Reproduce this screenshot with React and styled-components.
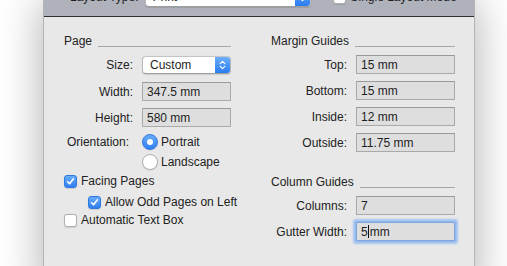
import * as React from 'react';
import styled, { createGlobalStyle } from 'styled-components';

const GlobalStyle = createGlobalStyle`
  html, body { margin: 0; padding: 0; background: #ffffff; }
  body { font-family: "Liberation Sans", Arial, sans-serif; font-size: 12px; color: #222222; }
`;

const Stage = styled.div`
  width: 507px; height: 266px;
  overflow: hidden;
  background: #ffffff;
  display: flex;
`;

const Window = styled.div`
  margin-left: 43px;
  width: 432px; height: 300px;
  flex-shrink: 0;
  box-sizing: border-box;
  border-left: 1px solid #b4b4b4;
  border-right: 1px solid #b4b4b4;
  background: #e8e8e8;
  box-shadow: 0 0 42px rgba(0, 0, 0, 0.32);
  display: flex; flex-direction: column;
`;

const Toolbar = styled.div`
  height: 16px;
  background: #afb2ba;
  border-bottom: 1px solid #2e2e2e;
  overflow: hidden;
`;

const ToolbarRow = styled.div`
  display: flex; align-items: center;
  height: 22px;
  margin-top: -14px;
  padding-left: 26px;
`;

const ToolbarLabel = styled.span`
  color: #1e1e1e;
  margin-right: 6px;
`;

const Body = styled.div`
  display: grid;
  grid-template-columns: 167px 184px;
  column-gap: 40px;
  padding: 17px 0 0 20px;
`;

const Column = styled.div`
  display: flex; flex-direction: column;
`;

const SectionHeader = styled.div`
  display: flex; align-items: flex-end;
  height: 14px;
  margin-top: ${p => p.$top || 0}px;
  line-height: 14px;
`;

const Rule = styled.div`
  flex: 1;
  height: 1px;
  background: #a6a6a6;
  margin: 0 0 1px 6px;
`;

const FormRow = styled.div`
  display: grid;
  grid-template-columns: ${p => p.$label}px 1fr;
  column-gap: 9px;
  align-items: center;
  height: ${p => p.$h || 18}px;
  margin-top: ${p => p.$top || 0}px;
`;

const Label = styled.span`
  text-align: right;
  white-space: nowrap;
  padding-right: ${p => p.$pad || 0}px;
`;

const Field = styled.div`
  position: relative;
  box-sizing: border-box;
  height: 19px;
  padding: 0 4px;
  display: flex; align-items: center;
  background: #dedede;
  border: 1px solid #a9a9a9;
  border-top-color: #9a9a9a;
  color: #1e1e1e;
  ${p => p.$focus && `
    border-color: #7ea6dc;
    box-shadow: 0 0 0 1px #92b7ea, 0 0 2px 3px #a3c4f0;
    border-radius: 1px;
  `}
`;

const Caret = styled.span`
  display: inline-block;
  width: 1px; height: 13px;
  background: #111111;
  margin: 0 1px 0 0;
`;

const Popup = styled.div`
  box-sizing: border-box;
  width: ${p => p.$w}px;
  height: ${p => p.$h || 18}px;
  display: flex; align-items: stretch;
  background: #ffffff;
  border: 1px solid #b9b9b9;
  border-top-color: #c4c4c4;
  border-bottom-color: #9e9e9e;
  border-radius: 4px;
  box-shadow: 0 0.5px 1px rgba(0,0,0,0.12);
  overflow: hidden;
`;

const PopupText = styled.span`
  flex: 1;
  display: flex; align-items: center;
  padding-left: 7px;
  color: #1e1e1e;
`;

const Stepper = styled.span`
  width: 15px;
  display: flex; align-items: center; justify-content: center;
  background: linear-gradient(#6cb0fb, #2a7cf0);
`;

const ChoiceRow = styled.div`
  display: flex; align-items: center;
  height: 18px;
  margin-top: ${p => p.$top || 0}px;
  padding-left: ${p => p.$indent || 0}px;
  white-space: nowrap;
`;

const Box = styled.span`
  box-sizing: border-box;
  width: 13px; height: 13px;
  flex-shrink: 0;
  margin-right: 4px;
  border-radius: 3px;
  display: flex; align-items: center; justify-content: center;
  background: ${p => (p.$on ? 'linear-gradient(#68acfa, #2f7ff1)' : '#ffffff')};
  border: 1px solid ${p => (p.$on ? '#2f78e0' : '#b0b0b0')};
  box-shadow: 0 0.5px 1px rgba(0,0,0,0.12);
`;

const Radio = styled(Box)`
  width: 16px; height: 16px;
  border-radius: 50%;
  margin-right: 3px;
`;

const Dot = styled.span`
  width: 6px; height: 6px;
  border-radius: 50%;
  background: #ffffff;
`;

const Check = () => (
  <svg width="9" height="9" viewBox="0 0 9 9">
    <path d="M1.6 4.8 L3.6 6.8 L7.4 1.8" fill="none" stroke="#ffffff" strokeWidth="1.6" strokeLinecap="round" strokeLinejoin="round" />
  </svg>
);

const Chevrons = () => (
  <svg width="7" height="10" viewBox="0 0 7 10">
    <path d="M1.2 3.6 L3.5 1.4 L5.8 3.6 M1.2 6.4 L3.5 8.6 L5.8 6.4" fill="none" stroke="#ffffff" strokeWidth="1.2" strokeLinecap="round" strokeLinejoin="round" />
  </svg>
);

const Checkbox = ({ on, children, top, indent }) => (
  <ChoiceRow $top={top} $indent={indent}>
    <Box $on={on}>{on && <Check />}</Box>
    {children}
  </ChoiceRow>
);

const RadioOption = ({ on, children }) => (
  <span style={{ display: 'flex', alignItems: 'center' }}>
    <Radio $on={on}>{on && <Dot />}</Radio>
    {children}
  </span>
);

const pageRows = [
  ['Width:', '347.5 mm'],
  ['Height:', '580 mm'],
];

const marginRows = [
  ['Top:', '15 mm'],
  ['Bottom:', '15 mm'],
  ['Inside:', '12 mm'],
  ['Outside:', '11.75 mm'],
];

export default function App() {
  return (
    <Stage>
      <GlobalStyle />
      <Window>
        <Toolbar>
          <ToolbarRow>
            <ToolbarLabel>Layout Type:</ToolbarLabel>
            <Popup $w={166} $h={20}>
              <PopupText>Print</PopupText>
              <Stepper><Chevrons /></Stepper>
            </Popup>
            <Box style={{ marginLeft: 22, marginRight: 5 }} />
            <ToolbarLabel>Single Layout Mode</ToolbarLabel>
          </ToolbarRow>
        </Toolbar>
        <Body>
          <Column>
            <SectionHeader>Page<Rule /></SectionHeader>
            <FormRow $label={69} $top={8}>
              <Label>Size:</Label>
              <Popup $w={89}>
                <PopupText>Custom</PopupText>
                <Stepper><Chevrons /></Stepper>
              </Popup>
            </FormRow>
            {pageRows.map(([label, value]) => (
              <FormRow key={label} $label={69} $top={8}>
                <Label>{label}</Label>
                <Field>{value}</Field>
              </FormRow>
            ))}
            <FormRow $label={69} $top={6} $h={20}>
              <Label $pad={4}>Orientation:</Label>
              <RadioOption on>Portrait</RadioOption>
            </FormRow>
            <FormRow $label={69} $h={20}>
              <span />
              <RadioOption>Landscape</RadioOption>
            </FormRow>
            <Checkbox on top={0}>Facing Pages</Checkbox>
            <Checkbox on top={3} indent={24}>Allow Odd Pages on Left</Checkbox>
            <Checkbox>Automatic Text Box</Checkbox>
          </Column>
          <Column>
            <SectionHeader>Margin Guides<Rule /></SectionHeader>
            {marginRows.map(([label, value], i) => (
              <FormRow key={label} $label={76} $top={i === 0 ? 7 : 8}>
                <Label>{label}</Label>
                <Field>{value}</Field>
              </FormRow>
            ))}
            <SectionHeader $top={24}>Column Guides<Rule /></SectionHeader>
            <FormRow $label={76} $top={7}>
              <Label>Columns:</Label>
              <Field>7</Field>
            </FormRow>
            <FormRow $label={76} $top={8}>
              <Label>Gutter Width:</Label>
              <Field $focus>5<Caret />mm</Field>
            </FormRow>
          </Column>
        </Body>
      </Window>
    </Stage>
  );
}
